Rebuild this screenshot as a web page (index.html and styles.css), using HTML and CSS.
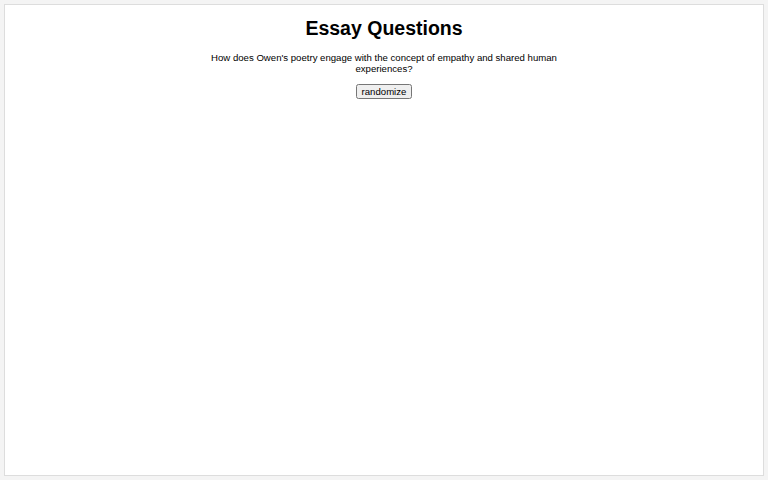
FILE: index.html
```html
<!DOCTYPE html>
<html lang="en">
<head>
    <meta charset="UTF-8">
    <meta name="viewport" content="width=device-width, initial-scale=1.0">
    <title>Essay Questions</title>
    <link rel="stylesheet" href="styles.css">
</head>
<body>
    <div class="container">
        <h1>Essay Questions</h1>
        <p class="question" id="question">How does Owen's poetry engage with the concept of empathy and shared human experiences?</p>
        <button class="randomize" id="randomize">randomize</button>
    </div>
</body>
</html>
```
FILE: styles.css
```css
html, body {
    height: 100%;
}
body {
    font-family: "Liberation Sans", Arial, sans-serif;
    background-color: #f4f4f4;
    margin: 0;
    padding: 4px;
    box-sizing: border-box;
}
.container {
    height: 100%;
    box-sizing: border-box;
    background: #fff;
    border: 1px solid #ddd;
    display: flex;
    flex-direction: column;
    align-items: center;
    padding-top: 12px;
}
h1 {
    margin: 0;
    font-size: 19.5px;
    color: #000;
}
.question {
    max-width: 360px;
    text-align: center;
    font-size: 9.6px;
    line-height: 11px;
    margin: 12px 0 0;
}
.randomize {
    margin-top: 10px;
    font-family: "Liberation Sans", Arial, sans-serif;
    font-size: 9.6px;
    padding: 0 4px;
}
```
